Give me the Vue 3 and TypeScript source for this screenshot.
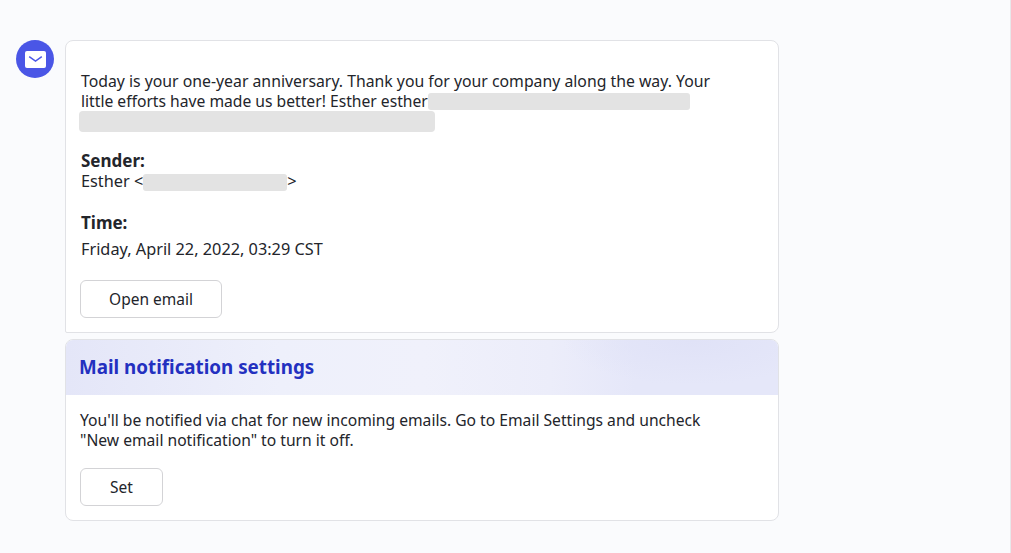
<script setup lang="ts">
const title = 'Mail notification settings'
</script>

<template>
  <div class="page">
    <div class="avatar">
      <svg width="21" height="17" viewBox="0 0 21 17">
        <rect x="0" y="0" width="21" height="17" rx="2" fill="#fff" />
        <path d="M4.2 5.6 L10.5 10 L16.8 5.6" fill="none" stroke="#4b57e8" stroke-width="1.5" />
      </svg>
    </div>
    <div class="cards">
      <section class="card first">
        <p class="message">
          Today is your one-year anniversary. Thank you for your company along the way. Your<br />
          <span class="line-two">little efforts have made us better! Esther esther</span><span class="redact r1"></span><br />
          <span class="redact r2"></span>
        </p>
        <div class="label sender">Sender:</div>
        <div class="value">Esther &lt;<span class="redact r3"></span>&gt;</div>
        <div class="label time">Time:</div>
        <div class="value date">Friday, April 22, 2022, 03:29 CST</div>
        <button class="btn open">Open email</button>
      </section>
      <section class="card second">
        <header class="head"><h2>{{ title }}</h2></header>
        <div class="body">
          <p class="note">You'll be notified via chat for new incoming emails. Go to Email Settings and uncheck<br />"New email notification" to turn it off.</p>
          <button class="btn set">Set</button>
        </div>
      </section>
    </div>
  </div>
</template>

<style>
html, body { margin: 0; background: #fafbfd; }
</style>

<style scoped>
.page {
  box-sizing: border-box;
  width: 1011px;
  height: 553px;
  padding: 40px 0 0 16px;
  display: flex;
  align-items: flex-start;
  gap: 11px;
  background: #fafbfd;
  border-right: 1px solid #e8e8ea;
  font-family: "Noto Sans", sans-serif;
  font-size: 16px;
  line-height: 20px;
  color: #23252b;
}
.avatar {
  width: 38px;
  height: 38px;
  border-radius: 50%;
  background: #4a56e6;
  display: flex;
  align-items: center;
  justify-content: center;
  flex: none;
}
.cards { width: 714px; display: flex; flex-direction: column; gap: 6px; }
.card {
  box-sizing: border-box;
  background: #fff;
  border: 1px solid #e1e2e6;
}
.first { height: 293px; padding: 30px 14px 0 14px; border-radius: 8px 8px 8px 2px; }
.second { height: 182px; border-radius: 8px; overflow: hidden; }
.message { margin: 0 0 0 1px; height: 61px; font-size: 15.8px; }
.line-two { font-size: 15.66px; }
.redact { display: inline-block; background: #e3e3e3; vertical-align: top; }
.r1 { width: 262px; height: 17px; margin-top: 2px; border-radius: 3px; }
.r2 { width: 356px; height: 21px; margin-left: -2px; border-radius: 4px; }
.r3 { width: 144px; height: 17px; margin-top: 3px; border-radius: 3px; }
.label { font-weight: 700; font-size: 17px; margin-left: 1px; }
.value { margin-left: 1px; font-size: 16.3px; }
.sender { margin-top: 19px; }
.time { margin-top: 22px; }
.date { margin-top: 6px; }
.btn {
  display: block;
  box-sizing: border-box;
  height: 38px;
  background: #fff;
  border: 1px solid #d3d3d6;
  border-radius: 6px;
  font: inherit;
  font-size: 15.5px;
  color: inherit;
  padding: 0;
}
.open { width: 142px; margin-top: 21px; }
.head {
  box-sizing: border-box;
  height: 55px;
  padding: 0 0 2px 13px;
  display: flex;
  align-items: center;
  background:
    radial-gradient(ellipse 130px 45px at 88% 0%, #e0e2f7 0%, rgba(224,226,247,0) 100%),
    linear-gradient(90deg, #e4e6f8 0%, #eef0fb 30%, #f0f1fb 50%, #ecedfa 68%, #e5e7f9 80%, #e5e7f9 100%);
}
.head h2 { margin: 0; font-size: 18.8px; font-weight: 700; color: #2330c0; line-height: 24px; }
.body { padding: 15px 14px 0; }
.note { margin: 0; font-size: 15.65px; }
.set { width: 83px; margin-top: 18px; }
</style>
